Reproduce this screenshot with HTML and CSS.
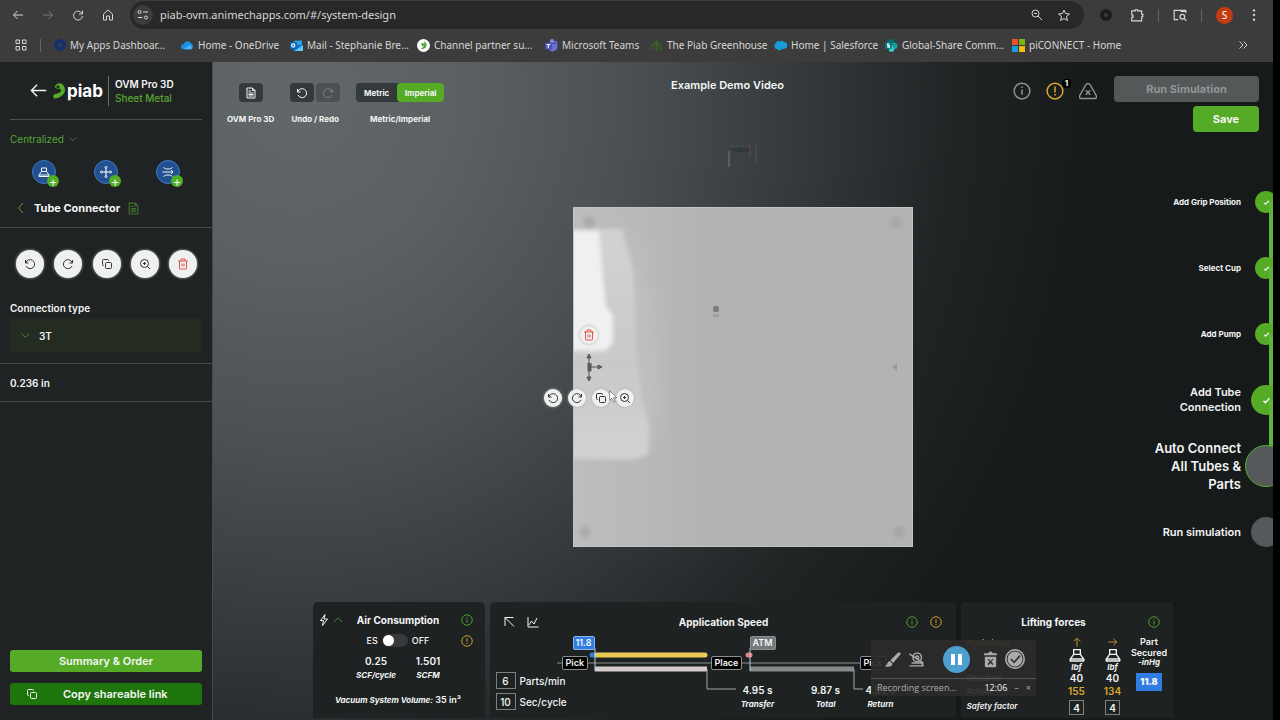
FILE: index.html
```
<!DOCTYPE html>
<html lang="en">
<head>
    <meta charset="UTF-8">
    <meta name="viewport" content="width=device-width, initial-scale=1.0">
    <title>OVM Pro 3D - System Design</title>
    <link rel="stylesheet" href="styles.css">
</head>
<body>
    <!-- Shared icons -->
    <svg class="sprite" aria-hidden="true">
        <symbol id="undo" viewBox="0 0 24 24"><path d="M3 4v6h6M3.500 10A9 9 0 1 1 4 16"/></symbol>
        <symbol id="redo" viewBox="0 0 24 24"><path d="M21 4v6h-6M20.500 10A9 9 0 1 0 20 16"/></symbol>
        <symbol id="copy" viewBox="0 0 24 24"><rect x="9" y="9" width="12" height="12" rx="2"/><path d="M6 15H5a2 2 0 0 1-2-2V5a2 2 0 0 1 2-2h8a2 2 0 0 1 2 2v1"/></symbol>
        <symbol id="zoom" viewBox="0 0 24 24"><circle cx="11" cy="11" r="8"/><path d="M17 17l5 5M11 8v6M8 11h6"/></symbol>
        <symbol id="trash" viewBox="0 0 24 24"><path d="M2 6h20M5 6v15a1 1 0 0 0 1 1h12a1 1 0 0 0 1-1V6M8 6V2h8v4M10 11v6M14 11v6"/></symbol>
        <symbol id="info" viewBox="0 0 24 24"><circle cx="12" cy="12" r="10.500"/><path d="M12 10v7M12 6v2"/></symbol>
        <symbol id="warn" viewBox="0 0 24 24"><circle cx="12" cy="12" r="10.500"/><path d="M12 6v8M12 16v2"/></symbol>
        <symbol id="doc" viewBox="0 0 24 24"><path d="M4 2h11l5 5v15H4zM15 2v5h5M7 8h5M7 12h10M7 15h10M7 18h10"/></symbol>
        <symbol id="check" viewBox="0 0 24 24"><path d="M4 13l5 5L20 6"/></symbol>
        <symbol id="cup" viewBox="0 0 24 24"><path d="M7 4h10v7H7zM7 11l-5 7h20l-5-7M2 18v3h20v-3"/></symbol>
        <symbol id="chevron" viewBox="0 0 24 24"><path d="M2 7l10 10L22 7"/></symbol>
    </svg>

    <div class="window">
        <header class="browser">
            <div class="toolbar">
                <nav class="browser-nav">
                    <button type="button" aria-label="Back"><svg class="icon" viewBox="0 0 24 24"><path d="M22 12H3M11 4l-8 8 8 8"/></svg></button>
                    <button type="button" aria-label="Forward" class="dim"><svg class="icon" viewBox="0 0 24 24"><path d="M2 12h19M13 4l8 8-8 8"/></svg></button>
                    <button type="button" aria-label="Reload"><svg class="icon" viewBox="0 0 24 24"><path d="M21 3v7h-7M20 9a9 9 0 1 0 1 5"/></svg></button>
                    <button type="button" aria-label="Home"><svg class="icon" viewBox="0 0 24 24"><path d="M3 10l9-8 9 8v12h-6v-8H9v8H3z"/></svg></button>
                </nav>
                <div class="address">
                    <span class="site-info"><svg class="icon" viewBox="0 0 24 24"><circle cx="5" cy="6" r="3"/><path d="M12 6h10M2 17h9"/><circle cx="18" cy="17" r="3"/></svg></span>
                    <input type="text" aria-label="Address" value="piab-ovm.animechapps.com/#/system-design">
                    <button type="button" aria-label="Zoom"><svg class="icon" viewBox="0 0 24 24"><circle cx="9" cy="9" r="7"/><path d="M14 14l8 8M6 9h6"/></svg></button>
                    <button type="button" aria-label="Bookmark"><svg class="icon" viewBox="0 0 24 24"><path d="M12 2l3 7 8 1-6 5 2 8-7-4-7 4 2-8-6-5 8-1z"/></svg></button>
                </div>
                <div class="extensions">
                    <span class="ring"></span>
                    <svg class="icon" viewBox="0 0 24 24"><path d="M3 5h6V3h4v2h7v6h2v4h-2v7H3v-6h2v-4H3z"/></svg>
                    <span class="divider"></span>
                    <svg class="icon" viewBox="0 0 24 24"><path d="M9 20H2V4h20v5M13 6h8"/><circle cx="16" cy="15" r="4"/><path d="M19 18l4 4"/></svg>
                    <span class="divider"></span>
                    <span class="avatar">S</span>
                    <svg class="icon dots" viewBox="0 0 24 24"><circle cx="12" cy="4" r="2"/><circle cx="12" cy="12" r="2"/><circle cx="12" cy="20" r="2"/></svg>
                </div>
            </div>
            <nav class="bookmarks">
                <svg class="icon apps" viewBox="0 0 24 24"><path d="M2 2h7v7H2zM15 2h7v7h-7zM2 15h7v7H2zM15 15h7v7h-7z"/></svg>
                <span class="divider"></span>
                <a href="#" class="w-apps"><span class="ring blue"></span>My Apps Dashboar...</a>
                <a href="#" class="w-drive"><svg viewBox="0 0 24 24"><path fill="#1c8fe0" d="M5 19a5 5 0 0 1 0-10 7 7 0 0 1 13-1 6 6 0 0 1 1 11z"/><path fill="#48b5f5" d="M5 19l11-8a5 5 0 0 1 3 8z"/></svg>Home - OneDrive</a>
                <a href="#" class="w-mail"><svg viewBox="0 0 24 24"><path fill="#2fa4e8" d="M8 3h14v9H8z"/><path fill="#1373c6" d="M7 11h17v11H7z"/><path fill="#5ccaf5" d="M8 22l16-11v11z"/><rect fill="#0b66bb" y="6" width="13" height="13" rx="1"/><circle cx="6" cy="12" r="3" fill="none" stroke="#fff" stroke-width="2"/></svg>Mail - Stephanie Bre...</a>
                <a href="#" class="w-channel"><svg viewBox="0 0 24 24"><circle cx="12" cy="12" r="12" fill="#fff"/><path fill="#4ba52a" d="M13 4c8 4 6 15-7 15 5-3 9-7 7-15zM8 8a3 3 0 1 1 1 5z"/></svg>Channel partner su...</a>
                <a href="#" class="w-teams"><svg viewBox="0 0 24 24"><circle cx="13" cy="4" r="4" fill="#8287ef"/><circle cx="20" cy="6" r="3" fill="#6267cf"/><path fill="#6b70dc" d="M7 9h16v7a6 6 0 0 1-5 5 7 7 0 0 1-11-2z"/><rect y="7" width="13" height="12" rx="1" fill="#4d52b9"/><path d="M3 10h7M6 10v7" stroke="#fff" stroke-width="2"/></svg>Microsoft Teams</a>
                <a href="#" class="w-green"><svg viewBox="0 0 24 24"><path d="M12 3v19M8 20V9l4-6 4 6v11M3 20v-8l5-4M21 20v-8l-5-4" fill="none" stroke="#37691f" stroke-width="2"/></svg>The Piab Greenhouse</a>
                <a href="#" class="w-sales"><svg viewBox="0 0 24 24"><path fill="#159cda" d="M3 8a5 5 0 0 1 8-3 5 5 0 0 1 8 1 6 6 0 0 1 0 12l-5 1a5 5 0 0 1-8 0 5 5 0 0 1-5-5 6 6 0 0 1 2-6z"/></svg>Home | Salesforce</a>
                <a href="#" class="w-share"><svg viewBox="0 0 24 24"><circle cx="11" cy="7" r="7" fill="#036c70"/><circle cx="17" cy="13" r="6" fill="#1a9ba1"/><circle cx="12" cy="19" r="5" fill="#37c6d0"/><rect y="6" width="12" height="12" rx="1" fill="#03787c"/><path d="M8 9H5v3h3v3H4" fill="none" stroke="#fff" stroke-width="2"/></svg>Global-Share Comm...</a>
                <a href="#"><svg viewBox="0 0 24 24"><path fill="#ea5328" d="M0 0h11v11H0z"/><path fill="#7fb40f" d="M13 0h11v11H13z"/><path fill="#109fe4" d="M0 13h11v11H0z"/><path fill="#f6b911" d="M13 13h11v11H13z"/></svg>piCONNECT - Home</a>
                <svg class="icon more" viewBox="0 0 24 24"><path d="M5 5l7 7-7 7M13 5l7 7-7 7"/></svg>
            </nav>
        </header>

        <div class="app">
            <aside class="sidebar">
                <div class="brand">
                    <button type="button" class="plain" aria-label="Back to overview"><svg class="icon arrow" viewBox="0 0 24 24"><path d="M23 12H2M10 4l-8 8 8 8"/></svg></button>
                    <div class="logo">
                        <svg viewBox="0 0 24 32"><path fill="#55ad24" d="M3 9C6 1 15 0 20 7c7 11-3 23-18 24-3-3-2-7 1-8 9-2 14-4 11-9-2-3-6 2-11-5z"/><circle cx="9" cy="9" r="3" fill="#252a27"/></svg>
                        <span>piab</span>
                    </div>
                    <div class="product">OVM Pro 3D<span>Sheet Metal</span></div>
                </div>
                <button type="button" class="mode">Centralized <svg class="icon"><use href="#chevron"/></svg></button>
                <div class="part-types">
                    <button type="button" aria-label="Add cup"><svg class="icon"><use href="#cup"/></svg><span>+</span></button>
                    <button type="button" aria-label="Add connector"><svg class="icon" viewBox="0 0 24 24"><circle cx="12" cy="12" r="2"/><circle cx="12" cy="3" r="2"/><circle cx="12" cy="21" r="2"/><circle cx="3" cy="12" r="2"/><circle cx="21" cy="12" r="2"/><path d="M12 5v5M12 14v5M5 12h5M14 12h5"/></svg><span>+</span></button>
                    <button type="button" aria-label="Add pump"><svg class="icon" viewBox="0 0 24 24"><path d="M1 12h21M18 8l4 4-4 4M3 3c4 4 14 4 18 0M3 21c4-4 14-4 18 0"/></svg><span>+</span></button>
                </div>
                <div class="part-title">
                    <button type="button" class="plain" aria-label="Back"><svg class="icon" viewBox="0 0 24 24"><path d="M16 2l-9 10 9 10"/></svg></button>
                    <h2>Tube Connector</h2>
                    <svg class="icon doc"><use href="#doc"/></svg>
                </div>
                <div class="part-actions">
                    <button type="button" class="round" aria-label="Rotate left"><svg class="icon"><use href="#undo"/></svg></button>
                    <button type="button" class="round" aria-label="Rotate right"><svg class="icon"><use href="#redo"/></svg></button>
                    <button type="button" class="round" aria-label="Duplicate"><svg class="icon"><use href="#copy"/></svg></button>
                    <button type="button" class="round" aria-label="Zoom to part"><svg class="icon"><use href="#zoom"/></svg></button>
                    <button type="button" class="round danger" aria-label="Delete"><svg class="icon"><use href="#trash"/></svg></button>
                </div>
                <div class="connection">
                    <label for="connectionType">Connection type</label>
                    <div class="select">
                        <svg class="icon"><use href="#chevron"/></svg>
                        <select id="connectionType">
                            <option>3T</option>
                            <option>2T</option>
                        </select>
                    </div>
                </div>
                <div class="size">0.236 in</div>
                <div class="sidebar-footer">
                    <button type="button" class="summary">Summary &amp; Order</button>
                    <button type="button" class="share"><svg class="icon"><use href="#copy"/></svg>Copy shareable link</button>
                </div>
            </aside>

            <main class="stage">
                <div class="stage-header">
                    <div class="tools">
                        <div class="tool">
                            <button type="button" class="square" aria-label="OVM Pro 3D"><svg class="icon"><use href="#doc"/></svg></button>
                            <span>OVM Pro 3D</span>
                        </div>
                        <div class="tool">
                            <div class="pair">
                                <button type="button" aria-label="Undo"><svg class="icon"><use href="#undo"/></svg></button>
                                <button type="button" aria-label="Redo" disabled><svg class="icon"><use href="#redo"/></svg></button>
                            </div>
                            <span>Undo / Redo</span>
                        </div>
                        <div class="tool">
                            <div class="units">
                                <button type="button">Metric</button>
                                <button type="button" class="active">Imperial</button>
                            </div>
                            <span>Metric/Imperial</span>
                        </div>
                    </div>
                    <h1>Example Demo Video</h1>
                    <div class="stage-actions">
                        <div class="alerts">
                            <svg class="icon"><use href="#info"/></svg>
                            <span class="alert"><svg class="icon"><use href="#warn"/></svg><b>1</b></span>
                            <svg class="icon" viewBox="0 0 24 24"><path d="M12 2c1 0 2 0 3 2l8 14c1 2 0 4-2 4H3c-2 0-3-2-2-4L9 4c1-2 2-2 3-2zM9 11l6 6M15 11l-6 6"/></svg>
                        </div>
                        <div class="buttons">
                            <button type="button" class="run" disabled>Run Simulation</button>
                            <button type="button" class="save">Save</button>
                        </div>
                    </div>
                </div>

                <div class="workspace">
                    <div class="plate">
                        <svg class="surface" viewBox="0 0 340 340" preserveAspectRatio="none">
                            <defs>
                                <linearGradient id="sheen"><stop offset="0" stop-color="#bdbdbd"/><stop offset=".2" stop-color="#b9b9b9"/><stop offset=".4" stop-color="#b3b3b3"/><stop offset="1" stop-color="#b3b3b3"/></linearGradient>
                                <linearGradient id="lamp" x2="0" y2="1"><stop offset="0" stop-color="#d2d2d2"/><stop offset=".6" stop-color="#c9c9c9"/><stop offset="1" stop-color="#d2d2d2"/></linearGradient>
                                <filter id="soft"><feGaussianBlur stdDeviation="2"/></filter>
                                <filter id="softer"><feGaussianBlur stdDeviation="12"/></filter>
                            </defs>
                            <rect width="340" height="340" fill="url(#sheen)"/>
                            <path d="M0 30h60l20 80 5 110-30 20H0z" fill="#c0c0c0" filter="url(#softer)"/>
                            <path d="M-8 22h58l2 12 9 32 2 80 6 48 8 26-2 28-14 4H-8z" fill="url(#lamp)" filter="url(#soft)"/>
                            <path d="M-8 24h34l7 76 7 8v28l-8 8H-8z" fill="#f0f0f0" filter="url(#soft)"/>
                            <g fill="#8f9290" opacity=".4" filter="url(#soft)"><circle cx="16" cy="15" r="6"/><circle cx="323" cy="15" r="6"/><circle cx="12" cy="325" r="6"/><circle cx="326" cy="325" r="6"/></g>
                            <path d="M324 156l-5 4 5 4z" fill="#9c9c9c"/>
                            <rect x="140" y="99" width="6" height="6" rx="2" fill="#7d7d7d"/>
                            <path d="M140 107h6v3h-6z" fill="#a0a0a0"/>
                            <rect x=".5" y=".5" width="339" height="339" fill="none" stroke="#c1c4c4"/>
                            <g stroke="#555" fill="#666"><path d="M16 149v23M16 160h12M15 156v8h3v-8"/><path d="M14 151l2-4 2 4zM14 170l2 4 2-4zM25 158l4 2-4 2z"/></g>
                        </svg>
                        <button type="button" class="round small danger at-top" aria-label="Delete connector"><svg class="icon"><use href="#trash"/></svg></button>
                        <div class="part-menu">
                            <button type="button" class="round small" aria-label="Rotate connector left"><svg class="icon"><use href="#undo"/></svg></button>
                            <button type="button" class="round small" aria-label="Rotate connector right"><svg class="icon"><use href="#redo"/></svg></button>
                            <button type="button" class="round small" aria-label="Duplicate connector"><svg class="icon"><use href="#copy"/></svg></button>
                            <button type="button" class="round small" aria-label="Zoom to connector"><svg class="icon"><use href="#zoom"/></svg></button>
                        </div>
                        <svg class="pump" viewBox="0 0 36 26"><path d="M6 8v16" stroke="#777c7e"/><path d="M3 3h24" stroke="#4f5456" stroke-dasharray="3 2"/><path d="M8 5h18v4H12z" fill="#33383a"/><path d="M27 2v12M33 2v18" stroke="#514544" stroke-width="2"/></svg>
                        <svg class="cursor" viewBox="0 0 16 24"><path d="M1 1v17l4-4 3 7 3-1-3-7h6z" fill="#fff" stroke="#444"/></svg>
                    </div>

                    <ol class="steps">
                        <li class="done"><span>Add Grip Position</span><i><svg class="icon"><use href="#check"/></svg></i></li>
                        <li class="done"><span>Select Cup</span><i><svg class="icon"><use href="#check"/></svg></i></li>
                        <li class="done"><span>Add Pump</span><i><svg class="icon"><use href="#check"/></svg></i></li>
                        <li class="done near"><span>Add Tube Connection</span><i><svg class="icon"><use href="#check"/></svg></i></li>
                        <li class="current"><span>Auto Connect All Tubes &amp; Parts</span><i></i></li>
                        <li class="near"><span>Run simulation</span><i></i></li>
                    </ol>
                </div>

                <div class="panels">
                    <section class="panel air">
                        <header>
                            <svg class="icon bolt" viewBox="0 0 24 24"><path d="M14 1L5 13h6l-2 10 10-13h-7z"/></svg>
                            <svg class="icon up" viewBox="0 0 24 24"><path d="M2 17l10-10 10 10"/></svg>
                            <h3>Air Consumption</h3>
                            <svg class="icon ok"><use href="#info"/></svg>
                        </header>
                        <div class="switch-row">
                            <label for="energySaving">ES</label>
                            <input type="checkbox" id="energySaving" class="switch">
                            <span>OFF</span>
                            <svg class="icon alerting"><use href="#warn"/></svg>
                        </div>
                        <div class="readings">
                            <div><b>0.25</b><em>SCF/cycle</em></div>
                            <div><b>1.501</b><em>SCFM</em></div>
                        </div>
                        <p class="volume"><em>Vacuum System Volume:</em> 35 in³</p>
                    </section>

                    <section class="panel speed">
                        <header>
                            <svg class="icon" viewBox="0 0 24 24"><path d="M21 3H4v17M4 3l18 18"/></svg>
                            <svg class="icon" viewBox="0 0 24 24"><path d="M2 2v20h21M4 18l5-8 5 6 6-12"/></svg>
                            <h3>Application Speed</h3>
                            <svg class="icon ok"><use href="#info"/></svg>
                            <svg class="icon alerting"><use href="#warn"/></svg>
                        </header>
                        <div class="timeline">
                            <svg viewBox="0 0 466 60">
                                <path d="M67 27h320" stroke="#8b8f90"/>
                                <path d="M102 19h4" stroke="#2f7de0" stroke-width="5" stroke-linecap="round"/>
                                <path d="M107 19h108" stroke="#eccb55" stroke-width="5" stroke-linecap="round"/>
                                <path d="M105 33h112" stroke="#d5cbcb" stroke-width="5"/>
                                <path d="M258 19h2" stroke="#e57d84" stroke-width="5" stroke-linecap="round"/>
                                <path d="M260 33h104" stroke="#85898a" stroke-width="5"/>
                                <path d="M105 12v23M260 12v23" stroke="#b9cfe0"/>
                                <path d="M217 33v20h29M364 33v20h9" stroke="#a5a8a8" fill="none"/>
                            </svg>
                            <span class="node flag-start">11.8</span>
                            <span class="node flag-end">ATM</span>
                            <span class="node pick">Pick</span>
                            <span class="node place">Place</span>
                            <span class="node pick-again">Pick</span>
                        </div>
                        <div class="speed-values">
                            <div class="rates">
                                <label><input type="text" value="6">Parts/min</label>
                                <label><input type="text" value="10">Sec/cycle</label>
                            </div>
                            <div class="times">
                                <div><b>4.95 s</b><em>Transfer</em></div>
                                <div><b>9.87 s</b><em>Total</em></div>
                                <div><b>4.92 s</b><em>Return</em></div>
                            </div>
                        </div>
                    </section>

                    <section class="panel lifting">
                        <header>
                            <h3>Lifting forces</h3>
                            <svg class="icon ok"><use href="#info"/></svg>
                        </header>
                        <div class="forces">
                            <table>
                                <thead>
                                    <tr>
                                        <th class="prelim">Preliminary</th>
                                        <th><svg class="icon dir" viewBox="0 0 24 24"><path d="M12 23V3M4 11l8-8 8 8"/></svg><svg class="icon cup"><use href="#cup"/></svg><em>lbf</em></th>
                                        <th><svg class="icon dir" viewBox="0 0 24 24"><path d="M1 12h20M13 4l8 8-8 8"/></svg><svg class="icon cup"><use href="#cup"/></svg><em>lbf</em></th>
                                    </tr>
                                </thead>
                                <tbody>
                                    <tr><th>Required</th><td>40</td><td>40</td></tr>
                                    <tr class="actual"><th>Actual</th><td>155</td><td>134</td></tr>
                                    <tr class="factor"><th>Safety factor</th><td><input type="text" aria-label="Vertical safety factor" value="4"></td><td><input type="text" aria-label="Horizontal safety factor" value="4"></td></tr>
                                </tbody>
                            </table>
                            <div class="secured">Part<br>Secured<em>-inHg</em><b>11.8</b></div>
                        </div>
                    </section>
                </div>

                <!-- Screen recorder widget -->
                <div class="recorder">
                    <div class="recorder-tools">
                        <svg viewBox="0 0 24 24"><path d="M22 2c2 1 2 2 1 3L13 17l-4-4L20 2zM8 14l4 4c-1 5-7 5-11 3 4 0 3-6 7-7z"/></svg>
                        <svg class="line" viewBox="0 0 24 24"><circle cx="13" cy="9" r="6"/><circle cx="13" cy="9" r="2"/><path d="M2 4l20 13M2 21h20M5 17h14l3 4"/></svg>
                        <button type="button" aria-label="Pause recording"><i></i><i></i></button>
                        <svg viewBox="0 0 24 24"><path fill-rule="evenodd" d="M3 3h6l1-2h4l1 2h6v3H3zM4 8h16v13a2 2 0 0 1-2 2H6a2 2 0 0 1-2-2zM8 12l3 3-3 3 1 2 3-3 3 3 1-2-3-3 3-3-1-1-3 3-3-3z"/></svg>
                        <svg class="line finish" viewBox="0 0 24 24"><circle cx="12" cy="12" r="11"/><circle cx="12" cy="12" r="8" fill="#aaa"/><path d="M7 12l4 4 7-8" stroke="#333"/></svg>
                    </div>
                    <div class="recorder-status"><span>Recording screen...</span><time>12:06</time><span>–</span><span>×</span></div>
                </div>
            </main>
        </div>
    </div>
</body>
</html>
```
FILE: styles.css
```
* {
    box-sizing: border-box;
}

body {
    margin: 0;
    background: #000;
    color: #f4f5f5;
    font-family: Inter, "Liberation Sans", sans-serif;
    font-size: 11px;
    line-height: 14px;
}

button, input, select {
    font: inherit;
    color: inherit;
    margin: 0;
    padding: 0;
    border: 0;
    background: none;
}

h1, h2, h3, p, ol {
    margin: 0;
    padding: 0;
    font-size: 11px;
}

em {
    font-size: 8px;
    font-weight: 700;
}

.sprite {
    position: absolute;
    width: 0;
    height: 0;
}

.icon {
    display: block;
    flex: none;
    width: 12px;
    height: 12px;
    fill: none;
    stroke: currentColor;
    stroke-width: 2;
}

.window {
    display: flex;
    flex-direction: column;
    min-height: 100vh;
    margin-right: 7px;
}

/* Browser bar */
.browser {
    height: 62px;
    background: #3c3c3c;
    color: #d6d6d6;
    font-family: "Noto Sans", "Open Sans", sans-serif;
    font-size: 10px;
}

.toolbar {
    display: flex;
    align-items: center;
    height: 30px;
    padding-left: 12px;
}

.browser-nav {
    display: flex;
    gap: 18px;
    margin-right: 16px;
}

.dim {
    color: #777;
}

.address {
    display: flex;
    flex: 1;
    align-items: center;
    gap: 15px;
    height: 28px;
    padding-right: 14px;
    padding-left: 3px;
    border-radius: 14px;
    background: #282828;
}

.address input {
    flex: 1;
    margin-left: -8px;
    font-size: 11px;
}

.site-info {
    padding: 4px;
    border-radius: 50%;
    background: #3c3c3c;
}

.extensions {
    display: flex;
    align-items: center;
    gap: 14px;
    padding-right: 12px;
    padding-left: 16px;
}

.extensions .ring {
    margin-right: 4px;
}

.extensions .icon {
    width: 14px;
    height: 14px;
}

.extensions .dots {
    fill: currentColor;
    stroke: none;
}

.ring {
    flex: none;
    width: 12px;
    height: 12px;
    border: 4px solid #1c1c1c;
    border-radius: 50%;
}

.ring.blue {
    border-color: #14306c;
}

.divider {
    width: 1px;
    height: 13px;
    background: #666;
}

.avatar {
    width: 17px;
    height: 17px;
    border-radius: 50%;
    background: #c23c11;
    color: #fff;
    line-height: 17px;
    text-align: center;
}

.bookmarks {
    display: flex;
    align-items: center;
    height: 30px;
    padding-right: 24px;
    padding-left: 15px;
}

.bookmarks .divider {
    margin-right: 13px;
    margin-left: 13px;
}

.bookmarks a {
    display: flex;
    align-items: center;
    gap: 4px;
    color: inherit;
    text-decoration: none;
    white-space: nowrap;
}

.bookmarks a svg {
    flex: none;
    width: 13px;
    height: 13px;
}

.w-apps { width: 127px; }
.w-drive { width: 109px; }
.w-mail { width: 127px; }
.w-channel { width: 128px; }
.w-teams { width: 105px; }
.w-green { width: 124px; }
.w-sales { width: 111px; }
.w-share { width: 127px; }

.more {
    margin-left: auto;
}

/* Sidebar */
.app {
    display: flex;
    flex: 1;
}

.sidebar {
    display: flex;
    flex: none;
    flex-direction: column;
    width: 213px;
    border-right: 1px solid #44494a;
    background: #202323;
}

.brand {
    display: flex;
    align-items: center;
    height: 58px;
    margin: 0 10px;
    padding-left: 20px;
    border-bottom: 1px solid #4a4e4f;
}

.plain {
    flex: none;
}

.arrow {
    width: 17px;
    height: 17px;
}

.logo {
    display: flex;
    align-items: center;
    gap: 1px;
    margin-left: 6px;
    padding-right: 5px;
    color: #fff;
    font-size: 17px;
    font-weight: 700;
    line-height: 22px;
}

.logo svg {
    width: 13px;
    height: 17px;
}

.product {
    padding: 1px 0 1px 6px;
    border-left: 1px solid #6a6e6f;
    font-size: 10px;
    font-weight: 600;
    white-space: nowrap;
}

.product span {
    display: block;
    color: #57a632;
    font-weight: 500;
}

.mode {
    display: flex;
    align-items: center;
    gap: 5px;
    margin: 12px 10px 0;
    color: #57a632;
    font-size: 10px;
}

.mode .icon {
    width: 8px;
    height: 8px;
}

.part-types {
    display: flex;
    gap: 38px;
    margin: 14px 0 0 32px;
}

.part-types button {
    position: relative;
    width: 24px;
    height: 24px;
    padding: 5px;
    border: 1px solid #3e78c4;
    border-radius: 50%;
    background: #225091;
}

.part-types span {
    position: absolute;
    right: -4px;
    bottom: -4px;
    width: 12px;
    height: 12px;
    border-radius: 50%;
    background: #4fae24;
    font-size: 13px;
    line-height: 12px;
}

.part-title {
    display: flex;
    align-items: center;
    gap: 7px;
    height: 39px;
    margin-top: 5px;
    padding-left: 15px;
    border-bottom: 1px solid #44494a;
}

.part-title .icon {
    color: #57a632;
}

.part-title .doc {
    width: 13px;
    height: 13px;
    opacity: .6;
}

.part-actions {
    display: flex;
    justify-content: space-between;
    margin: 22px 15px 0 16px;
}

.round {
    display: flex;
    align-items: center;
    justify-content: center;
    width: 28px;
    height: 28px;
    border-radius: 50%;
    background: #eff0f0;
    box-shadow: 0 0 3px #aaa;
    color: #333;
}

.round.danger {
    color: #e2574a;
}

.round.small {
    width: 18px;
    height: 18px;
}

.connection {
    margin-top: 23px;
    padding: 0 10px 11px;
    border-bottom: 1px solid #44494a;
    font-size: 10px;
    font-weight: 600;
}

.select {
    display: flex;
    align-items: center;
    gap: 9px;
    height: 33px;
    margin-top: 4px;
    padding-left: 11px;
    background: #242c22;
}

.select .icon {
    width: 9px;
    height: 9px;
    color: #57a632;
}

.select select {
    flex: 1;
    appearance: none;
}

.size {
    padding: 12px 10px 11px;
    border-bottom: 1px solid #44494a;
    font-size: 10px;
    font-weight: 600;
}

.sidebar-footer {
    display: flex;
    flex-direction: column;
    gap: 11px;
    margin: auto 10px 15px;
    font-weight: 600;
}

.sidebar-footer button {
    height: 22px;
    border-radius: 3px;
}

.summary {
    background: #55ab26;
}

.share {
    display: flex;
    align-items: center;
    gap: 25px;
    padding-left: 16px;
    background: #1e750c;
}

/* Stage */
.stage {
    position: relative;
    display: grid;
    flex: 1;
    grid-template-rows: 80px 1fr auto;
    overflow: hidden;
    background: radial-gradient(ellipse 730px 780px at 8% 5%, #626769 0%, #5b6062 22%, #4b5053 45%, #33383a 70%, #202425 90%, #171a1b 110%);
}

.stage-header {
    display: grid;
    grid-template-columns: 1fr auto 1fr;
    align-items: start;
    padding: 14px 14px 0;
}

.stage-header h1 {
    margin: 2px 31px 0 0;
    font-weight: 600;
}

.tools {
    display: flex;
    gap: 16px;
    padding-top: 7px;
}

.tool {
    display: flex;
    flex-direction: column;
    align-items: center;
    gap: 10px;
    font-size: 8px;
    font-weight: 700;
    line-height: 14px;
    white-space: nowrap;
}

.tool button {
    display: flex;
    align-items: center;
    justify-content: center;
    width: 24px;
    height: 19px;
    border-radius: 4px;
    background: #34393b;
}

.tool .pair {
    display: flex;
    gap: 2px;
}

.tool button:disabled {
    background: #4b5052;
    color: #7d8183;
}

.units {
    display: flex;
    border-radius: 4px;
    background: #34393b;
}

.tool .units button {
    width: 41px;
}

.tool .units .active {
    width: 47px;
    background: #55ab26;
}

.stage-actions {
    display: flex;
    gap: 17px;
    justify-content: flex-end;
}

.alerts {
    display: flex;
    gap: 15px;
    padding-top: 6px;
    color: #8f9394;
}

.alerts .icon {
    width: 18px;
    height: 18px;
}

.alert {
    position: relative;
    height: 18px;
    color: #dba72c;
}

.alert b {
    position: absolute;
    top: -3px;
    right: -7px;
    width: 9px;
    border-radius: 3px;
    background: #000;
    color: #fff;
    font-size: 8px;
    line-height: 9px;
    text-align: center;
}

.buttons {
    display: flex;
    flex-direction: column;
    align-items: flex-end;
    gap: 4px;
    font-weight: 700;
}

.buttons button {
    width: 66px;
    height: 26px;
    border-radius: 4px;
}

.buttons .run {
    width: 145px;
    background: #535859;
    color: #919596;
}

.save {
    background: #55ab26;
}

.workspace {
    display: grid;
    grid-template-columns: 1fr 340px 1fr;
    align-items: center;
}

.plate {
    position: relative;
    grid-column: 2;
    height: 340px;
    margin-top: 10px;
}

.surface {
    display: block;
    width: 100%;
    height: 100%;
}

.at-top {
    position: absolute;
    top: 119px;
    left: 7px;
}

.part-menu {
    position: absolute;
    top: 182px;
    left: -29px;
    display: flex;
    gap: 6px;
}

.pump {
    position: absolute;
    top: -64px;
    left: 150px;
    width: 36px;
    height: 26px;
}

.cursor {
    position: absolute;
    top: 183px;
    left: 36px;
    width: 9px;
    height: 14px;
}

.steps {
    grid-column: 3;
    align-self: start;
    justify-self: end;
    margin: 27px -18px 0 0;
    list-style: none;
}

.steps li {
    position: relative;
    display: grid;
    grid-template-columns: 90px 50px;
    align-items: center;
    height: 66px;
    font-size: 8px;
    font-weight: 700;
    text-align: right;
}

.steps i {
    display: flex;
    align-items: center;
    justify-content: center;
    justify-self: center;
    width: 22px;
    height: 22px;
    border-radius: 50%;
    background: #55595b;
}

.steps .icon {
    width: 7px;
    height: 7px;
    stroke-width: 4;
}

.steps .near {
    font-size: 11px;
    font-weight: 600;
    line-height: 15px;
}

.steps .near i {
    width: 30px;
    height: 30px;
}

.steps .near .icon {
    width: 9px;
    height: 9px;
}

.steps .done i {
    background: #55ab26;
}

.steps .done::after {
    position: absolute;
    top: 33px;
    right: 18px;
    width: 4px;
    height: 66px;
    background: #5fb23a;
    content: "";
}

.steps .current {
    font-size: 13px;
    font-weight: 600;
    line-height: 18px;
}

.steps .current i {
    z-index: 1;
    width: 42px;
    height: 42px;
    border: 1px solid #55ab26;
}

/* Bottom panels */
.panels {
    display: flex;
    gap: 5px;
    justify-content: center;
    padding-bottom: 2px;
}

.panel {
    height: 116px;
    padding: 8px 6px 0;
    border-radius: 5px 5px 0 0;
    background: #1e2222;
}

.panel header {
    display: flex;
    align-items: center;
    height: 24px;
}

.panel h3 {
    flex: 1;
    font-size: 10px;
    font-weight: 700;
    text-align: center;
}

.ok {
    color: #4e9c2c;
}

.alerting {
    color: #c99b2b;
}

.air {
    width: 172px;
    padding: 8px 12px 0 5px;
}

.air header {
    height: 20px;
}

.air h3 {
    padding-right: 7px;
}

.bolt {
    margin-right: 3px;
}

.up {
    width: 10px;
    color: #4e9c2c;
}

.switch-row {
    display: flex;
    align-items: center;
    height: 21px;
    padding-left: 49px;
    font-size: 9px;
    font-weight: 500;
}

.switch-row .icon {
    margin-left: auto;
}

.switch {
    position: relative;
    width: 26px;
    height: 13px;
    margin: 0 4px;
    border-radius: 7px;
    background: #37393a;
    appearance: none;
}

.switch::before {
    position: absolute;
    top: 1px;
    left: 1px;
    width: 11px;
    height: 11px;
    border-radius: 50%;
    background: #fff;
    content: "";
}

.readings {
    display: flex;
    justify-content: center;
    gap: 10px;
    margin: 3px 0 0 14px;
    text-align: center;
}

.readings div {
    width: 42px;
}

.readings b, .times b {
    display: block;
    font-size: 10px;
    font-weight: 600;
}

.volume {
    margin-top: 11px;
    padding-left: 6px;
    font-size: 9px;
    font-weight: 600;
    text-align: center;
    white-space: nowrap;
}

.speed {
    width: 466px;
}

.speed header {
    gap: 12px;
    padding: 0 8px 0 7px;
}

.speed h3 {
    padding-left: 3px;
}

.timeline {
    position: relative;
    height: 36px;
    margin: 2px -6px 0;
    font-size: 9px;
    font-weight: 600;
}

.timeline svg {
    display: block;
    width: 466px;
    height: 60px;
}

.node {
    position: absolute;
    padding: 0 3px;
    border: 1px solid #8b8f90;
    border-radius: 2px;
    background: #000;
    line-height: 12px;
}

.flag-start {
    top: 0;
    left: 83px;
    padding: 0 2px;
    border-color: #8fb6e8;
    background: #2f7de0;
}

.flag-end {
    top: 0;
    left: 260px;
    padding: 0 2px;
    background: #74787a;
}

.pick {
    top: 20px;
    left: 72px;
}

.place {
    top: 20px;
    left: 221px;
}

.pick-again {
    top: 20px;
    left: 370px;
}

.speed-values {
    display: flex;
}

.rates {
    width: 96px;
}

.rates label {
    display: flex;
    align-items: center;
    gap: 4px;
    height: 17px;
    margin-bottom: 4px;
    font-size: 10px;
    font-weight: 500;
}

.rates input, .factor input {
    width: 20px;
    height: 17px;
    border: 1px solid #7d8182;
    font-size: 10px;
    text-align: center;
}

.times {
    display: flex;
    padding: 11px 0 0 132px;
    text-align: center;
}

.times div {
    width: 68px;
}

.times div:last-child {
    width: 42px;
}

.readings em, .times em {
    display: block;
}

.lifting {
    width: 213px;
}

.lifting header {
    padding: 0 8px 0 0;
}

.lifting h3 {
    padding-right: 7px;
}

.forces {
    display: flex;
}

.forces table {
    flex: none;
    width: 164px;
    table-layout: fixed;
    border-collapse: collapse;
    font-size: 10px;
    line-height: 13px;
    text-align: center;
}

.forces th, .forces td {
    width: 36px;
    padding: 0;
    font-weight: 600;
    white-space: nowrap;
}

.forces th:first-child {
    width: 92px;
    font-size: 8px;
    font-style: italic;
    text-align: left;
}

.forces thead th {
    padding-top: 3px;
}

.forces thead th:first-child {
    vertical-align: top;
}

.forces .prelim, .actual td {
    color: #dba72c;
}

.forces em {
    display: block;
    line-height: 9px;
}

.dir, .cup {
    margin: 0 auto;
}

.dir {
    width: 10px;
    height: 10px;
    color: #e0a526;
}

.cup {
    width: 18px;
    height: 16px;
}

.factor input {
    display: block;
    width: 15px;
    height: 15px;
    margin: 0 auto;
}

.factor td {
    padding-top: 2px;
}

.secured {
    flex: 1;
    margin: 2px -3px 0;
    font-size: 9px;
    line-height: 11px;
    font-weight: 600;
    text-align: center;
}

.secured em {
    display: block;
}

.secured b {
    display: block;
    width: 26px;
    margin: 6px auto 0;
    background: #2f7de0;
    font-size: 9px;
    line-height: 18px;
}

.part-types .cup {
    width: 12px;
    height: 12px;
}

/* Recorder */
.recorder {
    position: absolute;
    right: 237px;
    bottom: 24px;
    width: 165px;
    height: 56px;
    background: rgba(43, 43, 43, .93);
    color: #aaa;
    font-family: "Open Sans", sans-serif;
    font-size: 9px;
}

.recorder-tools {
    display: flex;
    align-items: center;
    justify-content: space-between;
    height: 39px;
    padding: 0 11px 0 13px;
    border-bottom: 1px solid #555;
}

.recorder-tools svg {
    width: 17px;
    height: 17px;
    fill: #aaa;
}

.recorder-tools .line {
    fill: none;
    stroke: #aaa;
    stroke-width: 2;
}

.recorder-tools .line:nth-child(2) {
    margin-right: 6px;
    margin-left: -5px;
}

.recorder-tools .finish {
    width: 20px;
    height: 20px;
    margin-left: -6px;
}

.recorder-tools button {
    display: flex;
    align-items: center;
    justify-content: center;
    gap: 3px;
    width: 27px;
    height: 27px;
    border-radius: 50%;
    background: #4c9fce;
}

.recorder-tools i {
    width: 4px;
    height: 11px;
    background: #fff;
}

.recorder-status {
    display: flex;
    align-items: center;
    gap: 7px;
    height: 17px;
    padding: 0 5px 0 6px;
}

.recorder-status time {
    margin-left: auto;
    color: #f4f5f5;
}
```
